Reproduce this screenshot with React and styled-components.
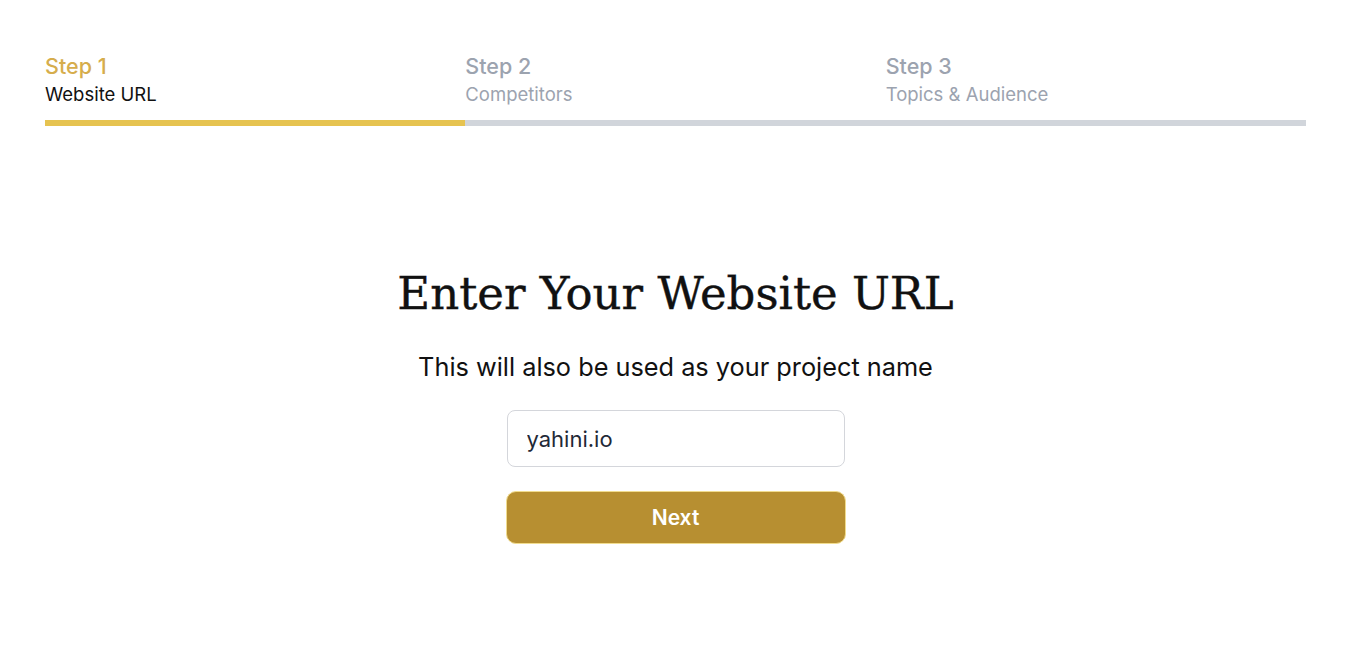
import React, { useState } from 'react';
import styled, { createGlobalStyle } from 'styled-components';

const GlobalStyle = createGlobalStyle`
  * { box-sizing: border-box; }
  body {
    margin: 0;
    background: #ffffff;
    font-family: Inter, "Noto Sans", sans-serif;
  }
`;

const Page = styled.div`
  padding: 52px 49px 0 45px;
  min-height: 646px;
`;

const Stepper = styled.div`
  display: grid;
  grid-template-columns: repeat(3, 1fr);
`;

const Step = styled.div`
  display: flex;
  flex-direction: column;
`;

const StepTitle = styled.div`
  font-size: 21.5px;
  font-weight: 500;
  line-height: 28px;
  color: ${(p) => (p.active ? '#d6ad4c' : '#9ca3af')};
`;

const StepLabel = styled.div`
  font-size: 18.5px;
  line-height: 26px;
  margin-top: 1px;
  color: ${(p) => (p.active ? '#111111' : '#9ca3af')};
`;

const Bar = styled.div`
  height: 6px;
  margin-top: 13px;
  background: ${(p) => (p.active ? '#e6c350' : '#d1d5db')};
`;

const Main = styled.main`
  display: flex;
  flex-direction: column;
  align-items: center;
  padding-top: 140px;
`;

const Heading = styled.h1`
  margin: 0;
  font-family: "DejaVu Serif", "Liberation Serif", serif;
  font-weight: 400;
  font-size: 45px;
  line-height: 56px;
  color: #111111;
  -webkit-text-stroke: 0.4px #111111;
`;

const Subtitle = styled.p`
  margin: 30px 0 0;
  font-size: 25.3px;
  line-height: 30px;
  color: #111111;
`;

const Field = styled.input`
  margin-top: 28px;
  width: 338px;
  height: 57px;
  padding: 0 19px;
  border: 1.5px solid #d4d6db;
  border-radius: 8px;
  font-family: Inter, "Noto Sans", sans-serif;
  font-size: 22px;
  color: #1f2937;
  outline: none;
`;

const NextButton = styled.button`
  margin-top: 24px;
  width: 340px;
  height: 53px;
  border: 1.5px solid #f1dc8e;
  border-radius: 10px;
  background: #b78f31;
  color: #ffffff;
  font-family: Inter, "Noto Sans", sans-serif;
  font-size: 21px;
  font-weight: 600;
  cursor: pointer;
`;

const steps = [
  { title: 'Step 1', label: 'Website URL' },
  { title: 'Step 2', label: 'Competitors' },
  { title: 'Step 3', label: 'Topics & Audience' },
];

const App = () => {
  const [url, setUrl] = useState('yahini.io');
  const current = 0;

  return (
    <Page>
      <GlobalStyle />
      <Stepper>
        {steps.map((s, i) => (
          <Step key={s.title}>
            <StepTitle active={i === current}>{s.title}</StepTitle>
            <StepLabel active={i === current}>{s.label}</StepLabel>
            <Bar active={i <= current} />
          </Step>
        ))}
      </Stepper>
      <Main>
        <Heading>Enter Your Website URL</Heading>
        <Subtitle>This will also be used as your project name</Subtitle>
        <Field value={url} onChange={(e) => setUrl(e.target.value)} />
        <NextButton type="button">Next</NextButton>
      </Main>
    </Page>
  );
};

export default App;
